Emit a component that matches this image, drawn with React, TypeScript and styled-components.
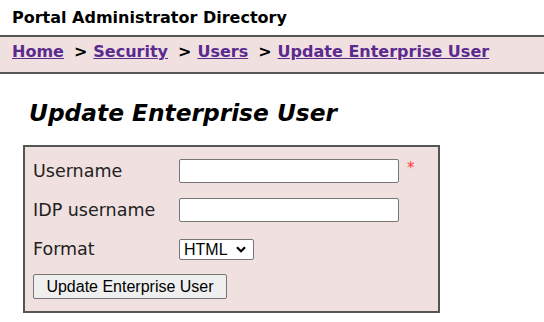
import styled, { createGlobalStyle } from "styled-components";

const GlobalStyle = createGlobalStyle`
  html, body {
    margin: 0;
    padding: 0;
    background: #ffffff;
  }
  body {
    font-family: "DejaVu Sans", Verdana, sans-serif;
    color: #000000;
  }
`;

const SiteTitle = styled.div`
  height: 35px;
  padding-left: 12px;
  font-size: 16px;
  font-weight: bold;
  line-height: 35px;
`;

const Breadcrumbs = styled.nav`
  display: flex;
  align-items: center;
  height: 39px;
  padding: 0 12px 6px;
  box-sizing: border-box;
  border-top: 2px solid #555555;
  border-bottom: 2px solid #555555;
  background: #f0e0e0;
  font-size: 16px;
  font-weight: bold;
`;

const Crumb = styled.a`
  color: #5b2a8e;
  text-decoration: underline;
`;

const Sep = styled.span`
  margin: 0 6px 0 10px;
`;

const PageTitle = styled.h1`
  margin: 26px 0 0 29px;
  font-size: 23.3px;
  font-style: italic;
  font-weight: bold;
  line-height: 26px;
`;

const FormBox = styled.form`
  width: 417px;
  height: 168px;
  box-sizing: border-box;
  margin: 19px 0 0 23px;
  padding: 12px 8px 0;
  border: 2px solid #555555;
  background: #f0e0e0;
`;

const Row = styled.div<{ $gap?: number }>`
  display: flex;
  align-items: center;
  height: 24px;
  margin-bottom: ${(p) => p.$gap ?? 15}px;
`;

const Label = styled.label`
  width: 146px;
  font-size: 17.5px;
  color: #222222;
`;

const TextInput = styled.input`
  width: 220px;
  height: 24px;
  box-sizing: border-box;
  border: 1px solid #767676;
  border-radius: 2px;
  background: #ffffff;
  margin: 0;
`;

const Required = styled.span`
  margin: -6px 0 0 8px;
  color: #ff3b3b;
  font-size: 15px;
`;

const chevron = encodeURIComponent(
  '<svg xmlns="http://www.w3.org/2000/svg" width="10" height="7" viewBox="0 0 10 7"><path d="M1 1.2 L5 5.2 L9 1.2" fill="none" stroke="#000" stroke-width="2.2"/></svg>'
);

const Select = styled.select`
  appearance: none;
  -webkit-appearance: none;
  height: 21px;
  width: 75px;
  box-sizing: border-box;
  padding: 0 0 0 4px;
  border: 1px solid #767676;
  border-radius: 2px;
  background: #ffffff url("data:image/svg+xml,${chevron}") no-repeat right 7px center;
  font-family: "Liberation Sans", Arial, sans-serif;
  font-size: 16px;
  color: #000000;
  margin: 0;
`;

const Button = styled.button`
  height: 25px;
  width: 194px;
  padding: 0;
  border: 1px solid #767676;
  border-radius: 2px;
  background: #efefef;
  font-family: "Liberation Sans", Arial, sans-serif;
  font-size: 16px;
  color: #000000;
`;

export default function App() {
  return (
    <>
      <GlobalStyle />
      <SiteTitle>Portal Administrator Directory</SiteTitle>
      <Breadcrumbs>
        <Crumb href="#">Home</Crumb>
        <Sep>&gt;</Sep>
        <Crumb href="#">Security</Crumb>
        <Sep>&gt;</Sep>
        <Crumb href="#">Users</Crumb>
        <Sep>&gt;</Sep>
        <Crumb href="#">Update Enterprise User</Crumb>
      </Breadcrumbs>
      <PageTitle>Update Enterprise User</PageTitle>
      <FormBox onSubmit={(e) => e.preventDefault()}>
        <Row>
          <Label>Username</Label>
          <TextInput type="text" />
          <Required>*</Required>
        </Row>
        <Row>
          <Label>IDP username</Label>
          <TextInput type="text" />
        </Row>
        <Row $gap={13}>
          <Label>Format</Label>
          <Select defaultValue="HTML">
            <option>HTML</option>
            <option>XML</option>
          </Select>
        </Row>
        <Button type="submit">Update Enterprise User</Button>
      </FormBox>
    </>
  );
}
